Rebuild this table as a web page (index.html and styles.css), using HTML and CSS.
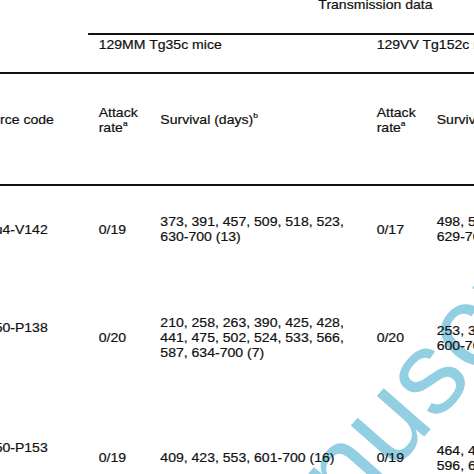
FILE: index.html
```html
<!DOCTYPE html>
<html>
<head>
<meta charset="utf-8">
<title>Transmission data</title>
<link rel="stylesheet" href="styles.css">
</head>
<body>
<div class="watermark">Author Manuscript</div>
<div class="page">
  <div class="sheet">
    <div class="title-row"><span class="title">Transmission data</span></div>
    <div class="groups">
      <div class="group g1">129MM Tg35c mice</div>
      <div class="group g2">129VV Tg152c mice</div>
    </div>
    <div class="row head">
      <div class="c1 left">Source code</div>
      <div class="c2">Attack<br>rate<sup>a</sup></div>
      <div class="c3">Survival (days)<sup>b</sup></div>
      <div class="c4">Attack<br>rate<sup>a</sup></div>
      <div class="c5">Survival (days)<sup>b</sup></div>
    </div>
    <div class="row r1">
      <div class="c1">u4-V142</div>
      <div class="c2">0/19</div>
      <div class="c3">373, 391, 457, 509, 518, 523,<br>630-700 (13)</div>
      <div class="c4">0/17</div>
      <div class="c5">498, 5<br>629-700</div>
    </div>
    <div class="row r2">
      <div class="c1 up">50-P138</div>
      <div class="c2">0/20</div>
      <div class="c3">210, 258, 263, 390, 425, 428,<br>441, 475, 502, 524, 533, 566,<br>587, 634-700 (7)</div>
      <div class="c4">0/20</div>
      <div class="c5">253, 3<br>600-700</div>
    </div>
    <div class="row r3">
      <div class="c1 up">50-P153</div>
      <div class="c2">0/19</div>
      <div class="c3">409, 423, 553, 601-700 (16)</div>
      <div class="c4">0/19</div>
      <div class="c5">464, 4<br>596, 6</div>
    </div>
  </div>
</div>
</body>
</html>
```
FILE: styles.css
```css
html, body {
  margin: 0;
  padding: 0;
  overflow: hidden;
  background: #ffffff;
}
body {
  width: 474px;
  height: 474px;
  position: relative;
  font-family: "Liberation Sans", Arial, sans-serif;
  font-size: 12.6px;
  line-height: 15px;
  color: #111;
}
.watermark {
  position: absolute;
  left: -86px;
  top: 864px;
  font-family: "Liberation Sans", Arial, sans-serif;
  font-size: 118px;
  line-height: 1;
  white-space: nowrap;
  color: #93cfe2;
  transform: rotate(-48.6deg);
  transform-origin: 0 0;
  z-index: 0;
}
.page {
  position: relative;
  z-index: 1;
  width: 474px;
  transform: scaleX(1.115);
  transform-origin: 0 0;
  -webkit-text-stroke: 0.2px #111;
}
.sheet {
  width: 614px;
  margin-left: -22.4px;
}
.title-row {
  margin-top: -2.4px;
  height: 35.4px;
  padding-left: 307.9px;
  box-sizing: border-box;
  white-space: nowrap;
}
.groups {
  margin-left: 101.6px;
  border-top: 2px solid #111;
  padding-top: 3.1px;
  height: 15px;
  padding-bottom: 18.9px;
  display: flex;
  white-space: nowrap;
}
.group.g1 {
  padding-left: 9.3px;
  width: 249.3px;
}
.row {
  display: grid;
  grid-template-columns: 110.9px 55.3px 194px 53.9px 200px;
  align-items: center;
  white-space: nowrap;
}
.row.head {
  border-top: 2px solid #111;
  border-bottom: 2px solid #111;
  height: 93.2px;
  padding-bottom: 16.8px;
}
.row.r1 { height: 89px; }
.row.r2 { height: 128px; }
.row.r3 { height: 112px; }
.c1 {
  text-align: right;
  padding-right: 45.7px;
}
.c1.left {
  text-align: left;
  padding-right: 0;
}
.c1.up {
  margin-bottom: 20px;
}
sup {
  font-size: 7.5px;
  line-height: 0;
  vertical-align: 6px;
}
```
